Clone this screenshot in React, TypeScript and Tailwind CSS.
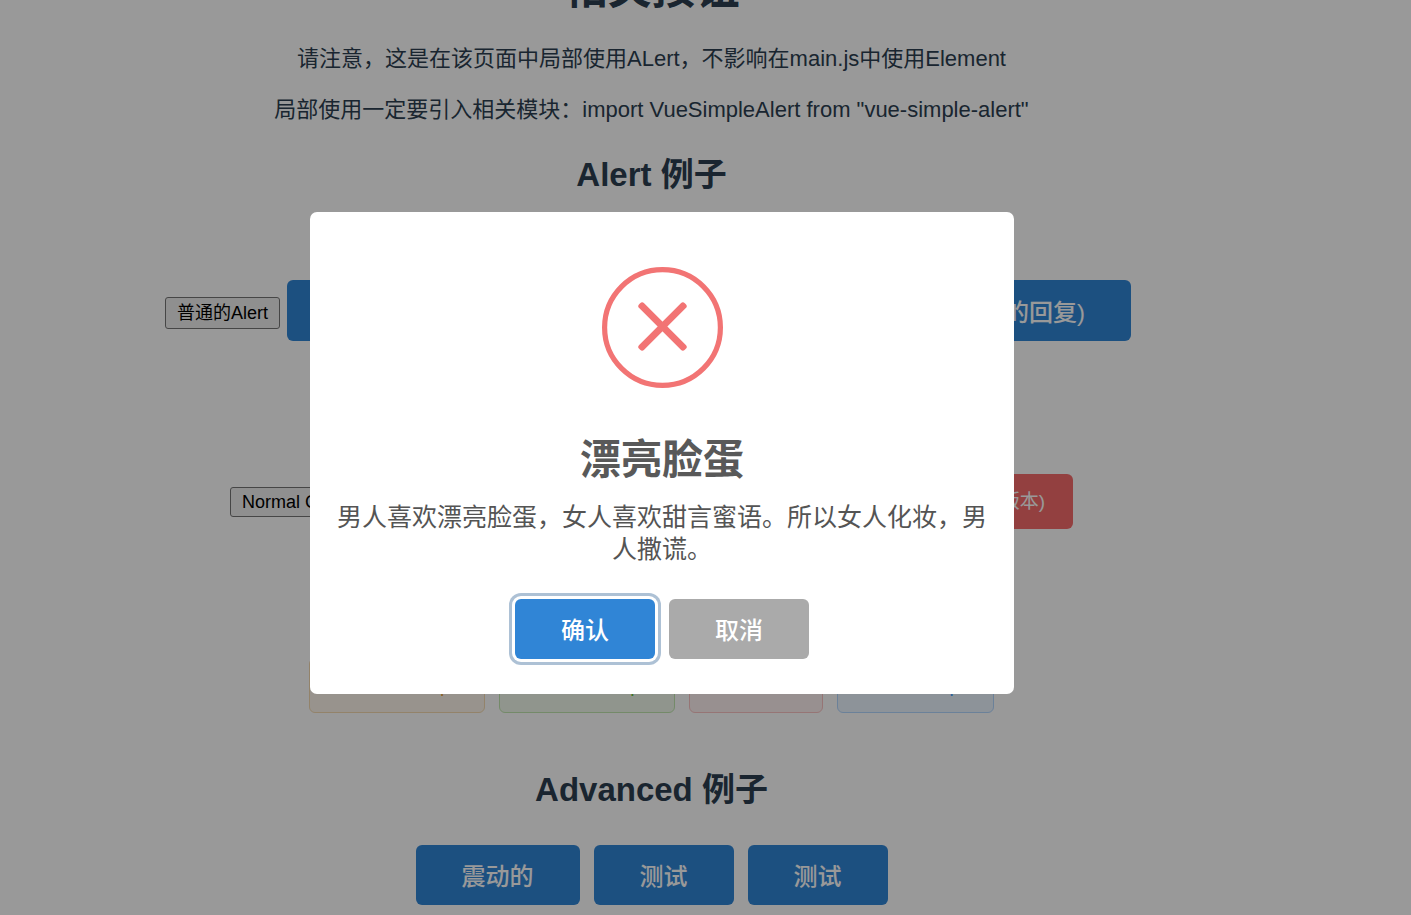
import { useState } from "react";
import type { ReactNode } from "react";
import clsx from "clsx";

type PlainType = "warning" | "success" | "danger" | "primary";

const plainStyles: Record<PlainType, string> = {
  warning: "bg-[#fdf6ec] border-[#f5dab1] text-[#e6a23c]",
  success: "bg-[#f0f9eb] border-[#c2e7b0] text-[#67c23a]",
  danger: "bg-[#fef0f0] border-[#fbc4c4] text-[#f56c6c]",
  primary: "bg-[#ecf5ff] border-[#b3d8ff] text-[#409eff]",
};

const prompts: { label: string; type: PlainType }[] = [
  { label: "普通的Prompt", type: "warning" },
  { label: "美化的Prompt", type: "success" },
  { label: "多行输入", type: "danger" },
  { label: "数字Prompt", type: "primary" },
];

const advanced = ["震动的", "测试", "测试"];

function NativeButton({
  children,
  className,
}: {
  children: ReactNode;
  className?: string;
}) {
  return (
    <button
      type="button"
      className={clsx(
        "shrink-0 rounded-[3px] border border-[#767676] bg-[#efefef] px-[11px] text-lg/[28px] text-black",
        className
      )}
    >
      {children}
    </button>
  );
}

function SwalButton({
  children,
  className,
  onClick,
}: {
  children: ReactNode;
  className?: string;
  onClick?: () => void;
}) {
  return (
    <button
      type="button"
      onClick={onClick}
      className={clsx(
        "min-h-[60px] rounded-md px-[46px] pt-1 text-2xl font-medium text-white",
        className
      )}
    >
      {children}
    </button>
  );
}

function ErrorIcon() {
  return (
    <svg
      className="h-[121px] w-[121px]"
      viewBox="0 0 121 121"
      fill="none"
      aria-hidden="true"
    >
      <circle cx="60.5" cy="60.5" r="57.9" stroke="#f27474" strokeWidth="5.2" />
      <g fill="#f27474">
        <rect
          x="28.2"
          y="56"
          width="64.6"
          height="7"
          rx="2.8"
          transform="rotate(45 60.5 59.5)"
        />
        <rect
          x="28.2"
          y="56"
          width="64.6"
          height="7"
          rx="2.8"
          transform="rotate(-45 60.5 59.5)"
        />
      </g>
    </svg>
  );
}

export default function App() {
  const [open, setOpen] = useState(true);

  return (
    <div className="min-h-screen bg-white font-['Liberation_Sans','Noto_Sans_CJK_SC',sans-serif]">
      <main className="flex flex-col items-center overflow-hidden pr-[108px] pb-2 text-center text-[22px]/[29px] text-[#2c3e50]">
        <h1 className="-mt-10 text-[44px]/[58px] font-bold">相关按钮</h1>
        <p className="mt-[26px]">
          请注意，这是在该页面中局部使用ALert，不影响在main.js中使用Element
        </p>
        <p className="mt-[22px]">
          局部使用一定要引入相关模块：import VueSimpleAlert from
          "vue-simple-alert"
        </p>

        <h2 className="mt-[29px] text-[33px]/[44px] font-bold">Alert 例子</h2>
        <div className="mt-[83px] flex w-[973px] items-center gap-[7px]">
          <NativeButton className="mt-1 py-px">普通的Alert</NativeButton>
          <div className="mr-[7px] flex h-[61px] grow gap-[14px]">
            <SwalButton className="grow bg-[#3085d6]" onClick={() => setOpen(true)}>
              美化的Alert
            </SwalButton>
            <SwalButton className="bg-[#3085d6]">Alert(带有你的回复)</SwalButton>
          </div>
        </div>

        <div className="mt-[133px] flex w-[843px] items-center justify-between">
          <NativeButton>Normal Confirm</NativeButton>
          <button
            type="button"
            className="h-[55px] rounded-md bg-[#f56c6c] px-7 text-[19px] text-white"
          >
            Confirm(美化版本)
          </button>
        </div>

        <div className="mt-[129px] flex gap-[14px]">
          {prompts.map((prompt) => (
            <button
              key={prompt.label}
              type="button"
              className={clsx(
                "h-[55px] rounded-md border px-7 text-[19px]",
                plainStyles[prompt.type]
              )}
            >
              {prompt.label}
            </button>
          ))}
        </div>

        <h2 className="mt-[55px] text-[33px]/[44px] font-bold">Advanced 例子</h2>
        <div className="mt-[33px] flex gap-[14px]">
          {advanced.map((label, index) => (
            <SwalButton key={index} className="bg-[#3085d6]">
              {label}
            </SwalButton>
          ))}
        </div>
      </main>

      {open && (
        <div className="fixed inset-0 flex items-center justify-center bg-black/40 pr-[87px] pb-[9px]">
          <div
            role="dialog"
            aria-modal="true"
            aria-labelledby="alert-title"
            className="flex w-full max-w-[704px] flex-col items-center rounded-[7px] bg-white px-5 pt-[55px] pb-[35px] text-center"
          >
            <ErrorIcon />
            <h2
              id="alert-title"
              className="mt-12 text-[41px]/[48px] font-semibold text-[#595959]"
            >
              漂亮脸蛋
            </h2>
            <p className="mt-[17px] text-[25px]/[32px] text-[#545454]">
              男人喜欢漂亮脸蛋，女人喜欢甜言蜜语。所以女人化妆，男人撒谎。
            </p>
            <div className="mt-[34px] flex gap-[14px]">
              <SwalButton
                className="bg-[#3085d6] shadow-[0_0_0_3px_#fff,0_0_0_6px_rgba(50,100,150,0.4)]"
                onClick={() => setOpen(false)}
              >
                确认
              </SwalButton>
              <SwalButton className="bg-[#aaa]" onClick={() => setOpen(false)}>
                取消
              </SwalButton>
            </div>
          </div>
        </div>
      )}
    </div>
  );
}
